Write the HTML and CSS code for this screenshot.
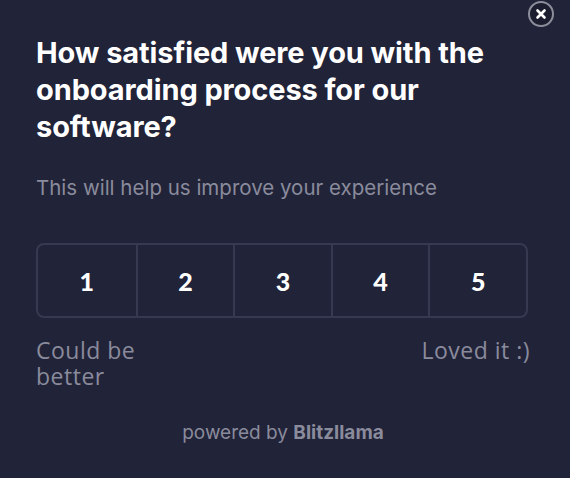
FILE: index.html
```html
<!DOCTYPE html>
<html>
<head>
<meta charset="utf-8">
<link rel="stylesheet" href="styles.css">
</head>
<body>
<div class="survey">
  <button class="close" aria-label="Close">
    <svg width="12" height="12" viewBox="0 0 12 12"><path d="M2.5 2.5 L9.5 9.5 M9.5 2.5 L2.5 9.5" stroke="#fff" stroke-width="2.6" stroke-linecap="round"/></svg>
  </button>
  <h1 class="question">How satisfied were you with the onboarding process for our software?</h1>
  <p class="subtitle">This will help us improve your experience</p>
  <div class="scale">
    <div class="cell">1</div>
    <div class="cell">2</div>
    <div class="cell">3</div>
    <div class="cell">4</div>
    <div class="cell">5</div>
  </div>
  <div class="labels">
    <span class="label-left">Could be better</span>
    <span class="label-right">Loved it :)</span>
  </div>
  <div class="footer">powered by <b>Blitzllama</b></div>
</div>
</body>
</html>
```
FILE: styles.css
```css
html, body {
  margin: 0;
  padding: 0;
  background: #212338;
}
.survey {
  position: relative;
  width: 570px;
  height: 478px;
  box-sizing: border-box;
  padding: 34px 42px 0 36px;
  font-family: Inter, "Liberation Sans", sans-serif;
}
.close {
  position: absolute;
  top: 1px;
  right: 16px;
  width: 26px;
  height: 26px;
  border-radius: 50%;
  border: 2px solid #8d8e9c;
  background: #1c1e30;
  padding: 0;
  display: flex;
  align-items: center;
  justify-content: center;
}
.question {
  margin: 0;
  color: #ffffff;
  font-size: 29px;
  line-height: 37px;
  font-weight: 700;
  letter-spacing: -0.1px;
}
.subtitle {
  margin: 30px 0 0;
  color: #8a8b9c;
  font-size: 20.5px;
  line-height: 26px;
}
.scale {
  margin-top: 42px;
  display: grid;
  grid-template-columns: repeat(5, 1fr);
  width: 492px;
  height: 75px;
  box-sizing: border-box;
  border: 2px solid #363950;
  border-radius: 8px;
}
.cell {
  display: flex;
  align-items: center;
  justify-content: center;
  color: #ffffff;
  font-family: Lato, "Liberation Sans", sans-serif;
  font-weight: 900;
  font-size: 25px;
  border-left: 2px solid #363950;
}
.cell:first-child { border-left: none; }
.labels {
  display: flex;
  justify-content: space-between;
  align-items: flex-start;
  width: 494px;
  margin-top: 19px;
  font-family: "Open Sans", "Liberation Sans", sans-serif;
  color: #8a8b9c;
  font-size: 23px;
  line-height: 26px;
  letter-spacing: 0.5px;
}
.label-left { width: 120px; }
.footer {
  margin-top: 32px;
  text-align: center;
  color: #8a8b9c;
  font-size: 19px;
  line-height: 23px;
  width: 494px;
}
.footer b { font-weight: 700; }
```
